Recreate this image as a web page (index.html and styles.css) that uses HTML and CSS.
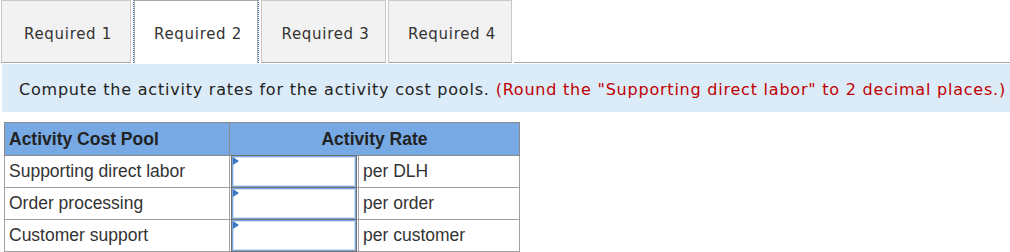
FILE: index.html
```html
<!DOCTYPE html>
<html lang="en">
<head>
    <meta charset="UTF-8">
    <title>Activity Rates</title>
    <link rel="stylesheet" href="styles.css">
</head>
<body>
    <div class="tabs">
        <div class="tab">Required 1</div>
        <div class="tab active">Required 2</div>
        <div class="tab">Required 3</div>
        <div class="tab">Required 4</div>
        <div class="tab-rest"></div>
    </div>

    <div class="instructions">
        Compute the activity rates for the activity cost pools. <span class="note">(Round the "Supporting direct labor" to 2 decimal places.)</span>
    </div>

    <table class="rates">
        <thead>
            <tr>
                <th class="pool">Activity Cost Pool</th>
                <th colspan="2" class="rate">Activity Rate</th>
            </tr>
        </thead>
        <tbody>
            <tr>
                <td>Supporting direct labor</td>
                <td class="entry"><input type="text"></td>
                <td class="unit">per DLH</td>
            </tr>
            <tr>
                <td>Order processing</td>
                <td class="entry"><input type="text"></td>
                <td class="unit">per order</td>
            </tr>
            <tr>
                <td>Customer support</td>
                <td class="entry"><input type="text"></td>
                <td class="unit">per customer</td>
            </tr>
        </tbody>
    </table>
</body>
</html>
```

FILE: styles.css
```css
body {
    margin: 0;
    padding: 0;
    font-family: "DejaVu Sans", Verdana, sans-serif;
    color: #222;
    background: white;
}

.tabs {
    display: flex;
    align-items: stretch;
    height: 63px;
    padding-left: 1px;
}

.tab {
    box-sizing: border-box;
    display: flex;
    align-items: center;
    justify-content: center;
    width: 130px;
    margin-right: 2px;
    padding: 4px 0 0 4px;
    background: #f2f2f2;
    border: 1px solid #c8c8c8;
    border-bottom: 1px solid #a8a8a8;
    font-size: 15px;
    letter-spacing: 0.7px;
    color: #333;
}

.tab:nth-child(2) { width: 126px; }
.tab:nth-child(3) { width: 125px; }
.tab:nth-child(4) { width: 124px; }

.tab.active {
    background: white;
    border-top: 1px solid #a8a8a8;
    border-left: 1px dotted #3a73c4;
    border-right: 1px dotted #3a73c4;
    border-bottom: none;
    box-shadow: inset 1px 0 #b0b0b0, inset -1px 0 #b0b0b0;
}

.tab-rest {
    flex: 1;
    border-bottom: 1px solid #a8a8a8;
}

.instructions {
    box-sizing: border-box;
    margin: 1px 0 0 2px;
    height: 48px;
    display: flex;
    align-items: center;
    padding: 3px 0 0 17px;
    background: #dcebf8;
    font-size: 16px;
    letter-spacing: 0.78px;
    white-space: nowrap;
    overflow: hidden;
}

.instructions .note {
    color: #c00000;
    margin-left: 6px;
}

.rates {
    margin: 10px 0 0 4px;
    border-collapse: collapse;
    font-family: "Liberation Sans", Arial, sans-serif;
    font-size: 17.5px;
    color: #333;
}

.rates th,
.rates td {
    border: 1px solid #8a8a8a;
    height: 31px;
    padding: 0 4px;
}

.rates th {
    background: #77aae4;
    height: 32px;
    color: #222;
}

.rates th.pool {
    text-align: left;
    width: 216px;
}

.rates th.rate {
    text-align: center;
}

.rates td {
    border-color: #a0a0a0;
}

.rates td.entry {
    position: relative;
    padding: 0 1px 0 2px;
    width: 125px;
}

.rates td.entry::before {
    content: "";
    position: absolute;
    left: 3px;
    top: 1px;
    border-top: 4px solid transparent;
    border-bottom: 4px solid transparent;
    border-left: 6px solid #3b78c4;
}

.rates td.entry input {
    box-sizing: border-box;
    display: block;
    width: 124px;
    height: 31px;
    border: 1px solid #7fa7d9;
    box-shadow: inset 0 0 0 1px #cfe0f4;
    outline: 1px solid #707070;
    margin: 0;
    padding: 0 4px;
    background: white;
}

.rates td.unit {
    width: 152px;
}
```
